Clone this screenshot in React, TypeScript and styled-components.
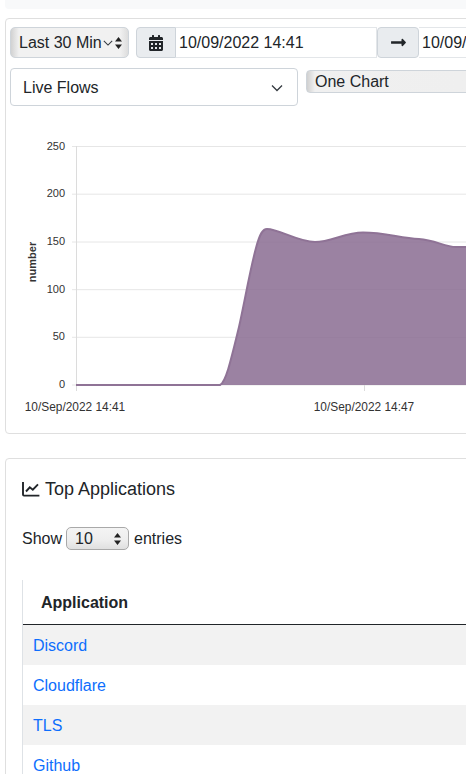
import styled, { createGlobalStyle } from "styled-components";
import { FaCalendarAlt, FaLongArrowAltRight } from "react-icons/fa";

const GlobalStyle = createGlobalStyle`
  html, body {
    margin: 0;
    height: 774px;
    width: 466px;
    overflow: hidden;
    background: #fff;
    font-family: "Liberation Sans", Arial, sans-serif;
    font-size: 16px;
    color: #212529;
  }
`;

const Page = styled.div`
  width: 720px;
  padding-left: 5px;
`;

const TopStrip = styled.div`
  height: 9px;
  margin-bottom: 9px;
  background: #f8f9fa;
  border-radius: 0 0 4px 4px;
`;

const Card = styled.section`
  box-sizing: border-box;
  border: 1px solid #dfdfdf;
  border-radius: 4px;
  background: #fff;
`;

const ChartCard = styled(Card)`
  height: 416px;
  padding: 8px 4px 0;
  margin-bottom: 24px;
`;

const Toolbar = styled.div`
  display: flex;
  align-items: flex-start;
  gap: 7px;
  height: 31px;
  margin-bottom: 10px;
`;

const GradientSelect = styled.div<{ $width: number; $height: number }>`
  display: flex;
  align-items: center;
  justify-content: space-between;
  box-sizing: border-box;
  width: ${(p) => p.$width}px;
  height: ${(p) => p.$height}px;
  border: 1px solid #ced4da;
  border-radius: 5px;
  background: linear-gradient(to right, #d2d2d2 0, #f1f1f1 8px, #f1f1f1 calc(100% - 8px), #dddddd 100%);
`;

const RangeSelect = styled(GradientSelect)`
  padding: 0 5px 0 8px;
  white-space: nowrap;
`;

const RangeIcons = styled.span`
  display: flex;
  align-items: center;
  gap: 1px;
  margin-left: -3px;
`;

const InputGroup = styled.div`
  display: flex;
  height: 31px;
`;

const Addon = styled.div<{ $width: number }>`
  display: flex;
  align-items: center;
  justify-content: center;
  box-sizing: border-box;
  width: ${(p) => p.$width}px;
  border: 1px solid #ced4da;
  border-radius: 4px 0 0 4px;
  background: #e9ecef;
  color: #212529;
`;

const MiddleAddon = styled(Addon)`
  border-radius: 4px;
`;

const DateInput = styled.input<{ $width: number }>`
  box-sizing: border-box;
  width: ${(p) => p.$width}px;
  height: 31px;
  margin: 0;
  padding: 0 0 0 3px;
  border: 1px solid #e3e6e9;
  border-left: 0;
  background: #fff;
  font: inherit;
  color: #212529;
  outline: none;
`;

const FormRow = styled.div`
  display: flex;
  align-items: flex-start;
  gap: 8px;
`;

const FlowSelect = styled.div`
  display: flex;
  align-items: center;
  justify-content: space-between;
  box-sizing: border-box;
  width: 288px;
  height: 38px;
  padding: 2px 14px 0 12px;
  border: 1px solid #ced4da;
  border-radius: 4px;
`;

const ChartSelect = styled(GradientSelect)`
  margin-top: 2px;
  padding: 0 0 0 8px;
  border-radius: 4px 0 0 4px;
  background: linear-gradient(to right, #d0d0d0 0, #f0f0f0 8px, #eeeeee 100%);
`;

const ChartFrame = styled.div`
  margin-top: 24px;
  margin-left: -10px;
`;

const AxisLabel = styled.text`
  font-family: "Liberation Sans", Arial, sans-serif;
  font-size: 11px;
  fill: #333;
`;

const TimeLabel = styled(AxisLabel)`
  font-size: 11.9px;
`;

const AxisTitle = styled(AxisLabel)`
  font-weight: 700;
`;

const TableCard = styled(Card)`
  height: 360px;
  padding: 18px 16px 0;
`;

const CardTitle = styled.h5`
  display: flex;
  align-items: center;
  gap: 5px;
  height: 24px;
  margin: 0 0 26px;
  font-size: 18px;
  font-weight: 400;
  line-height: 24px;
`;

const LengthRow = styled.div`
  display: flex;
  align-items: center;
  gap: 5px;
  height: 23px;
  margin-bottom: 30px;
`;

const LengthSelect = styled(GradientSelect)`
  margin-left: -1px;
  padding: 0 6px 0 8px;
  border-color: #a9a9a9;
  background: linear-gradient(to bottom, #f4f4f4 0, #ededed 60%, #e0e0e0 100%);
`;

const TableWrap = styled.div`
  border-left: 1px solid #dee2e6;
`;

const HeadCell = styled.div`
  box-sizing: border-box;
  height: 45px;
  padding: 14px 18px 0;
  border-bottom: 1px solid #212529;
  font-weight: 700;
  line-height: 18px;
`;

const Row = styled.div<{ $striped: boolean }>`
  display: flex;
  align-items: center;
  box-sizing: border-box;
  height: 40px;
  padding: 1px 0 0 10px;
  background: ${(p) => (p.$striped ? "#f2f2f2" : "#fff")};
`;

const AppLink = styled.a`
  color: #0d6efd;
  text-decoration: none;
`;

const UpDown = () => (
  <svg width="9" height="14" viewBox="0 0 9 14" aria-hidden="true">
    <path d="M4.5 1 8 5.6H1zM4.5 13 1 8.4h7z" fill="#222" />
  </svg>
);

const Chevron = ({ width = 12 }: { width?: number }) => (
  <svg width={width} height="8" viewBox="0 0 12 8" aria-hidden="true">
    <path d="M1 1.5l5 5 5-5" fill="none" stroke="#343a40" strokeWidth="1.3" />
  </svg>
);

const LineChartIcon = () => (
  <svg width="18" height="16" viewBox="0 0 18 16" aria-hidden="true">
    <path d="M1 1v12.6a1 1 0 0 0 1 1h15.4" fill="none" stroke="#212529" strokeWidth="1.9" />
    <path d="M4 10.5l3.8-4.2 3 2.4L16 3.4" fill="none" stroke="#212529" strokeWidth="1.9" />
  </svg>
);

const gridLines = [
  { y: 146.5, label: "250" },
  { y: 194.2, label: "200" },
  { y: 242, label: "150" },
  { y: 289.7, label: "100" },
  { y: 337.3, label: "50" },
  { y: 385, label: "0" },
];

// chart svg starts at page y=130
const top = 130;
const curve =
  "M220 385 C226 382 231 360 239 327 C245 300 250 270 256 248 C260 233 263 229 267 229 C279 229 298 242 315 242 C331 242 345 232.5 363 232.5 C385 232.5 400 238 419 239 C435 240 445 247 456 247 L466 247";

const flowsChart = (
  <svg width="466" height="290" viewBox={`0 ${top} 466 290`} style={{ display: "block" }}>
    {gridLines.map((g) => (
      <line key={g.y} x1="72" x2="466" y1={g.y} y2={g.y} stroke="#e6e6e6" />
    ))}
    <line x1="76.5" x2="76.5" y1="146" y2="391" stroke="#dcdcdc" />
    <line x1="364.5" x2="364.5" y1="385" y2="391" stroke="#dcdcdc" />
    <path d={`${curve} L466 385 L220 385 Z`} fill="#8a6c92" fillOpacity="0.85" />
    <path d={`M76 385 L220 385 ${curve.slice(curve.indexOf("C"))}`} fill="none" stroke="#8f7396" strokeWidth="2" />
    {gridLines.map((g) => (
      <AxisLabel key={g.label} x="65" y={g.y + 3} textAnchor="end">
        {g.label}
      </AxisLabel>
    ))}
    <AxisTitle transform="rotate(-90 36 262)" x="36" y="262" textAnchor="middle">
      number
    </AxisTitle>
    <TimeLabel x="75" y="411" textAnchor="middle">
      10/Sep/2022 14:41
    </TimeLabel>
    <TimeLabel x="364" y="411" textAnchor="middle">
      10/Sep/2022 14:47
    </TimeLabel>
  </svg>
);

const apps = ["Discord", "Cloudflare", "TLS", "Github"];

export default function App() {
  return (
    <Page>
      <GlobalStyle />
      <TopStrip />
      <ChartCard>
        <Toolbar>
          <RangeSelect $width={119} $height={31}>
            <span>Last 30 Min</span>
            <RangeIcons>
              <Chevron width={10} />
              <UpDown />
            </RangeIcons>
          </RangeSelect>
          <InputGroup>
            <Addon $width={40}>
              <FaCalendarAlt size={16} />
            </Addon>
            <DateInput $width={201} readOnly value="10/09/2022 14:41" />
            <MiddleAddon $width={42}>
              <FaLongArrowAltRight size={17} />
            </MiddleAddon>
            <DateInput $width={201} readOnly value="10/09/2022 14:47" />
          </InputGroup>
        </Toolbar>
        <FormRow>
          <FlowSelect>
            <span>Live Flows</span>
            <Chevron />
          </FlowSelect>
          <ChartSelect $width={300} $height={23}>
            One Chart
          </ChartSelect>
        </FormRow>
        <ChartFrame>{flowsChart}</ChartFrame>
      </ChartCard>
      <TableCard>
        <CardTitle>
          <LineChartIcon />
          Top Applications
        </CardTitle>
        <LengthRow>
          Show
          <LengthSelect $width={63} $height={23}>
            <span>10</span>
            <UpDown />
          </LengthSelect>
          entries
        </LengthRow>
        <TableWrap>
          <HeadCell>Application</HeadCell>
          {apps.map((app, i) => (
            <Row key={app} $striped={i % 2 === 0}>
              <AppLink href="#">{app}</AppLink>
            </Row>
          ))}
        </TableWrap>
      </TableCard>
    </Page>
  );
}
